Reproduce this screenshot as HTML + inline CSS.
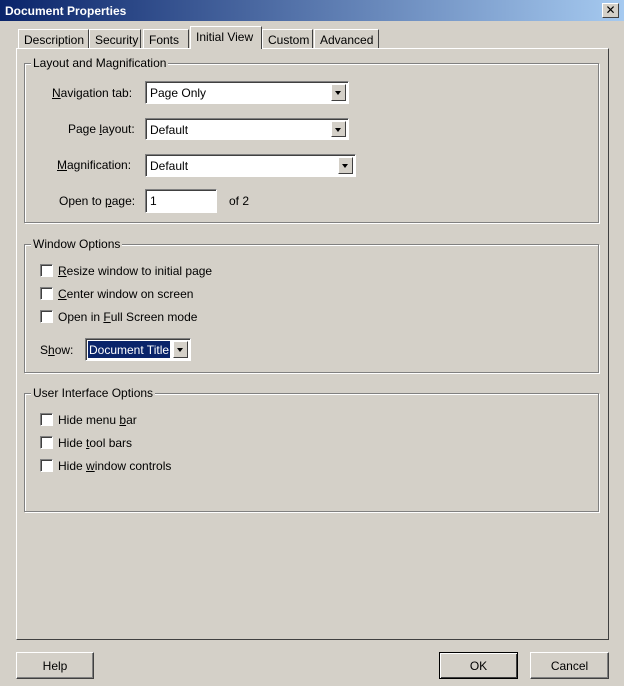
<!DOCTYPE html><html><head><style>
*{box-sizing:border-box}
body{margin:0;width:624px;height:686px;background:#d4d0c8;font-family:"Liberation Sans",Arial,sans-serif;font-size:12px;color:#000;position:relative;overflow:hidden}
.a{position:absolute;white-space:nowrap}
.title{left:0;top:0;width:624px;height:21px;background:linear-gradient(90deg,#0a246a,#a6caf0);color:#fff;font-weight:bold;font-size:12px;padding:4px 0 0 5px}
.close{left:602px;top:3px;width:17px;height:15px;background:#d4d0c8;border:1px solid;border-color:#fff #404040 #404040 #fff;font:bold 12px/12px "DejaVu Sans";text-align:center;color:#000}
.panel{left:16px;top:48px;width:593px;height:592px;border:1px solid;border-color:#fff #404040 #404040 #fff}
.tab{top:29px;height:20px;border:1px solid;border-bottom:none;border-color:#fff #404040 #fff #fff;padding:3px 0 0 5px;background:#d4d0c8}
.tab.sel{top:26px;height:23px;z-index:2}
.grp{border:1px solid #808080;box-shadow:1px 1px 0 #fff inset,1px 1px 0 #fff}
.lg{background:#d4d0c8;padding:0 2px}
.sel2{background:#fff;border:1px solid;border-color:#808080 #fff #fff #808080;box-shadow:inset 1px 1px 0 #404040;padding:4px 0 0 4px}
.arr{position:absolute;right:2px;top:2px;width:15px;bottom:2px;background:#d4d0c8;border:1px solid;border-color:#fff #404040 #404040 #fff}
.arr:after{content:"";position:absolute;left:3px;top:6px;border:3.5px solid transparent;border-top:4px solid #000}
.cb{width:13px;height:13px;background:#fff;border:1px solid;border-color:#808080 #fff #fff #808080;box-shadow:inset 1px 1px 0 #404040}
.btn{height:27px;border:1px solid;border-color:#fff #404040 #404040 #fff;text-align:center;padding-top:6px;box-shadow:inset -1px -1px 0 #808080}
</style></head><body>
<div class="a title">Document Properties</div>
<div class="a close">✕</div>
<div class="a tab" style="left:18px;width:71px">Description</div>
<div class="a tab" style="left:89px;width:52px">Security</div>
<div class="a tab" style="left:143px;width:46px">Fonts</div>
<div class="a tab sel" style="left:190px;width:72px;padding-top:3px">Initial View</div>
<div class="a tab" style="left:262px;width:51px">Custom</div>
<div class="a tab" style="left:314px;width:65px">Advanced</div>
<div class="a panel"></div>

<div class="a grp" style="left:24px;top:63px;width:575px;height:160px"></div>
<div class="a lg" style="left:31px;top:56px">Layout and Magnification</div>
<div class="a" style="left:52px;top:86px"><u>N</u>avigation tab:</div>
<div class="a sel2" style="left:145px;top:81px;width:204px;height:23px">Page Only<div class="arr"></div></div>
<div class="a" style="left:68px;top:122px">Page <u>l</u>ayout:</div>
<div class="a sel2" style="left:145px;top:118px;width:204px;height:22px">Default<div class="arr"></div></div>
<div class="a" style="left:57px;top:158px"><u>M</u>agnification:</div>
<div class="a sel2" style="left:145px;top:154px;width:211px;height:23px">Default<div class="arr"></div></div>
<div class="a" style="left:59px;top:194px">Open to <u>p</u>age:</div>
<div class="a sel2" style="left:145px;top:189px;width:72px;height:24px;padding-top:4px">1</div>
<div class="a" style="left:229px;top:194px">of 2</div>

<div class="a grp" style="left:24px;top:244px;width:575px;height:129px"></div>
<div class="a lg" style="left:31px;top:237px">Window Options</div>
<div class="a cb" style="left:40px;top:264px"></div><div class="a" style="left:58px;top:264px"><u>R</u>esize window to initial page</div>
<div class="a cb" style="left:40px;top:287px"></div><div class="a" style="left:58px;top:287px"><u>C</u>enter window on screen</div>
<div class="a cb" style="left:40px;top:310px"></div><div class="a" style="left:58px;top:310px">Open in <u>F</u>ull Screen mode</div>
<div class="a" style="left:40px;top:343px">S<u>h</u>ow:</div>
<div class="a sel2" style="left:85px;top:338px;width:106px;height:23px;padding:2px 0 0 2px"><span style="background:#0a246a;color:#fff;outline:1px dotted #fff;padding:2px 1px 0;display:inline-block;height:17px">Document Title</span><div class="arr"></div></div>

<div class="a grp" style="left:24px;top:393px;width:575px;height:119px"></div>
<div class="a lg" style="left:31px;top:386px">User Interface Options</div>
<div class="a cb" style="left:40px;top:413px"></div><div class="a" style="left:58px;top:413px">Hide menu <u>b</u>ar</div>
<div class="a cb" style="left:40px;top:436px"></div><div class="a" style="left:58px;top:436px">Hide <u>t</u>ool bars</div>
<div class="a cb" style="left:40px;top:459px"></div><div class="a" style="left:58px;top:459px">Hide <u>w</u>indow controls</div>

<div class="a btn" style="left:16px;top:652px;width:78px">Help</div>
<div class="a btn" style="left:439px;top:652px;width:79px;border:1px solid #000;box-shadow:inset 1px 1px 0 #fff,inset -1px -1px 0 #404040">OK</div>
<div class="a btn" style="left:530px;top:652px;width:79px">Cancel</div>
</body></html>
